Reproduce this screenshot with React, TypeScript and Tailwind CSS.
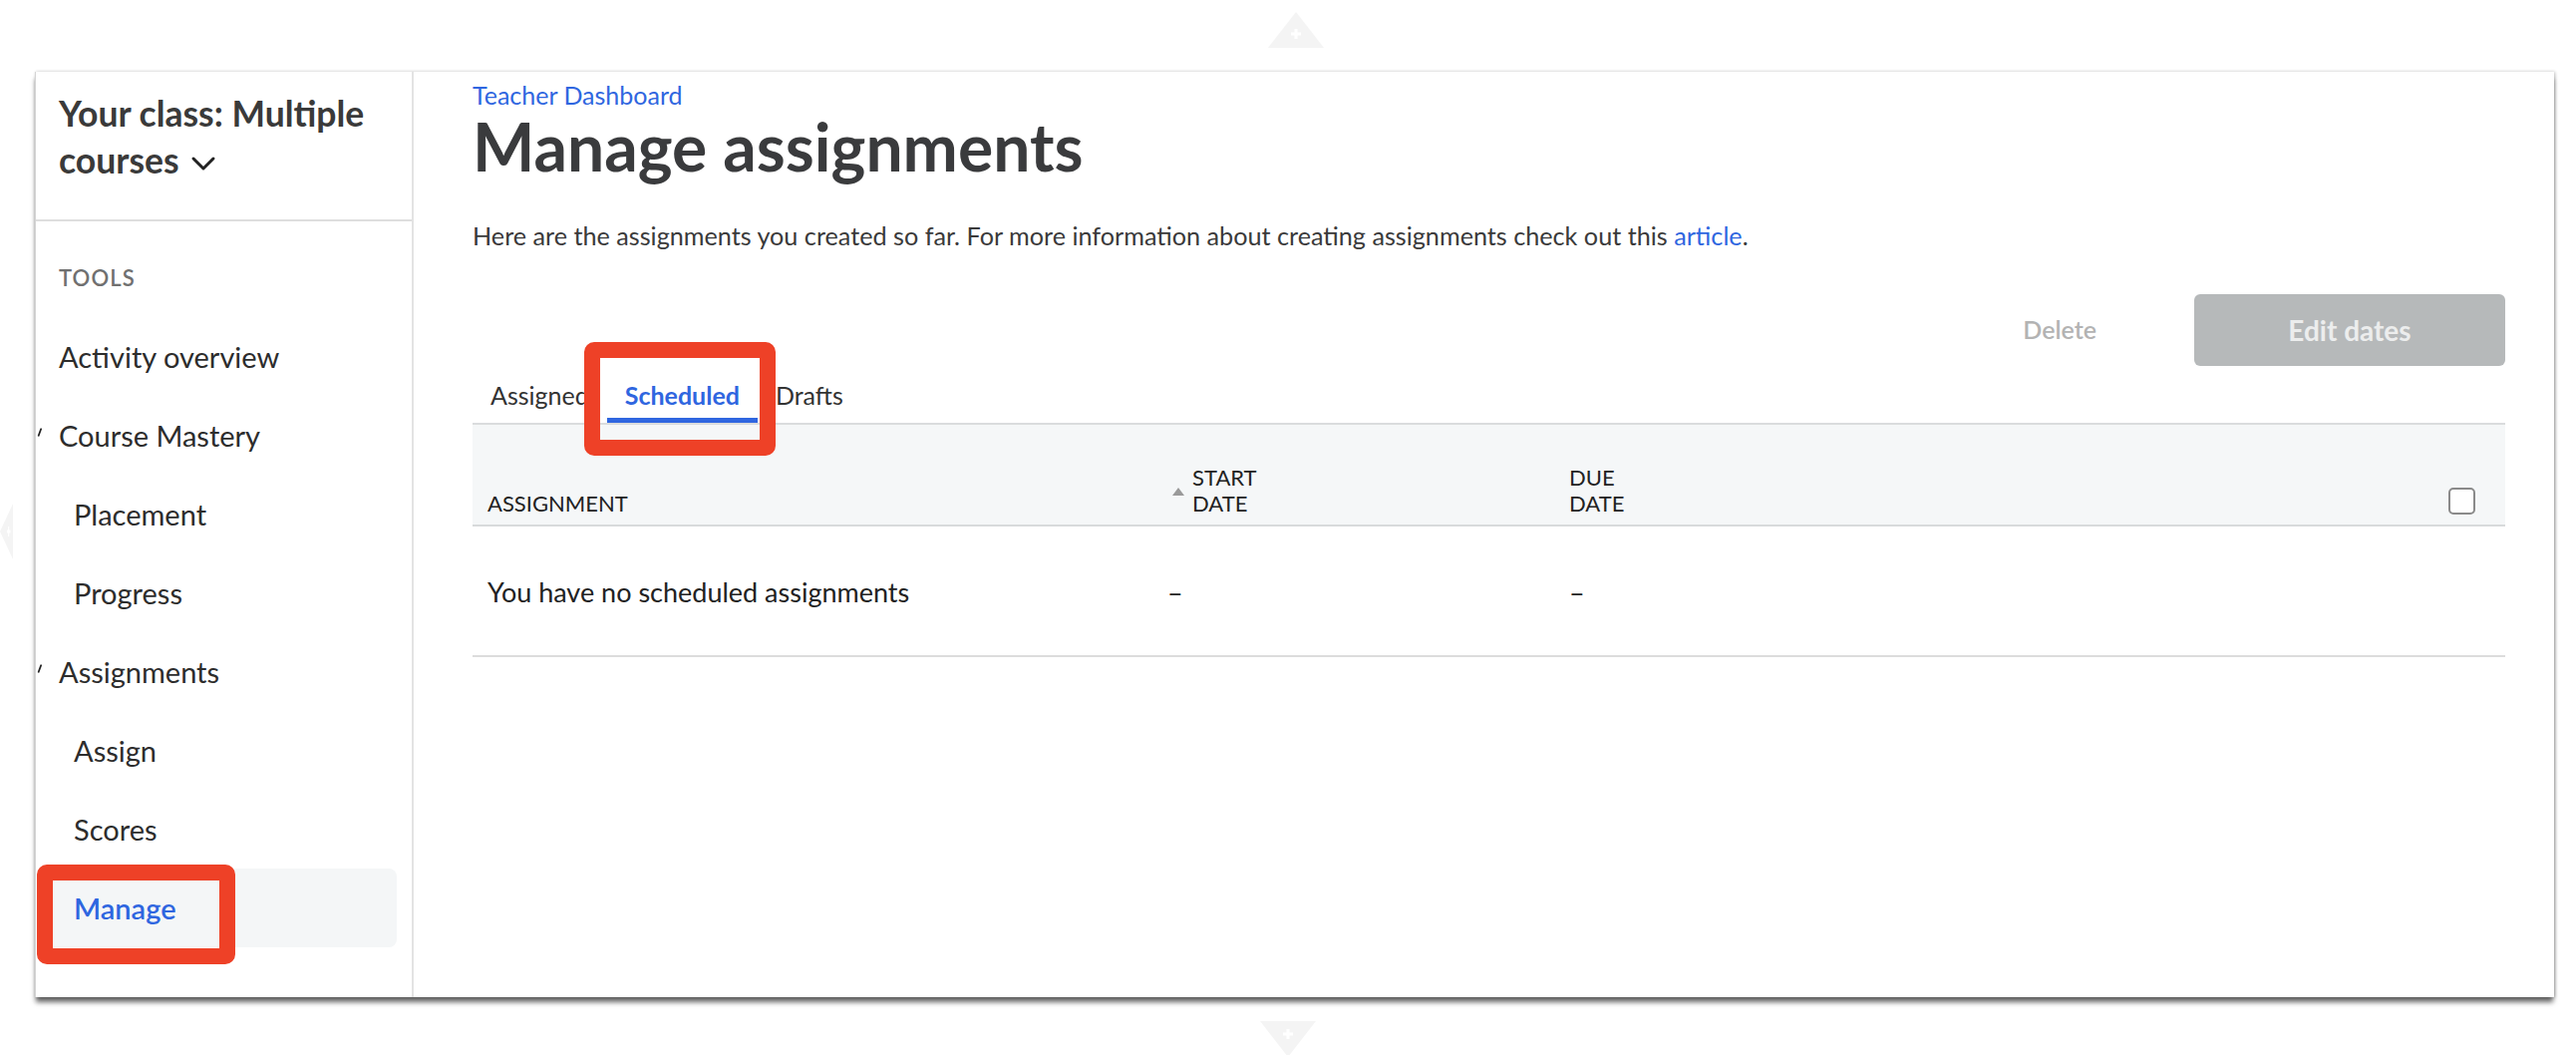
import { ChevronDown } from 'lucide-react'

const tools = [
  { label: 'Activity overview', level: 0 },
  { label: 'Course Mastery', level: 0, caret: true },
  { label: 'Placement', level: 1 },
  { label: 'Progress', level: 1 },
  { label: 'Assignments', level: 0, caret: true },
  { label: 'Assign', level: 1 },
  { label: 'Scores', level: 1 },
  { label: 'Manage', level: 1, active: true },
]

function Marker({ dir }: { dir: 'up' | 'down' | 'left' }) {
  const pts = dir === 'up' ? '28,0 56,36 0,36' : dir === 'down' ? '0,0 56,0 28,36' : '36,0 36,56 0,28'
  const vb = dir === 'left' ? '0 0 36 56' : '0 0 56 36'
  const plus = dir === 'up' ? 'M28 17v10M23 22h10' : dir === 'down' ? 'M28 8v10M23 13h10' : 'M24 23v10M19 28h10'
  return (
    <svg viewBox={vb} className={dir === 'left' ? 'w-[13px] h-[56px]' : 'w-[56px] h-[36px]'} preserveAspectRatio="none">
      <polygon points={pts} fill="#f4f4f4" />
      <path d={plus} stroke="#ffffff" strokeWidth="3" />
    </svg>
  )
}

export default function App() {
  return (
    <div className="relative w-[2584px] h-[1058px] bg-white overflow-hidden font-['Lato','Open_Sans',sans-serif] text-[#333]">
      {/* faint decorations around the frame */}
      <div className="absolute left-[1272px] top-[12px]">
        <Marker dir="up" />
      </div>
      <div className="absolute left-[1264px] top-[1024px]">
        <Marker dir="down" />
      </div>
      <div className="absolute left-0 top-[505px]">
        <Marker dir="left" />
      </div>

      <div className="pt-[72px] pl-[35px]">
        <div className="flex w-[2527px] h-[928px] bg-white border-l border-[#d4d4d4] shadow-[0_6px_5px_-1px_rgba(0,0,0,0.6),1px_0_3px_rgba(0,0,0,0.25)]">
          {/* sidebar */}
          <aside className="w-[379px] shrink-0 border-r-2 border-[#e3e3e3] flex flex-col">
            <div className="h-[150px] border-b-2 border-[#dedede] pl-[23px] pt-[18px]">
              <p className="text-[35.5px] leading-[47px] font-bold text-[#3a3a3a]">
                Your class: Multiple
                <br />
                courses
                <ChevronDown className="inline-block w-[40px] h-[40px] ml-[4px] -mt-[2px] text-[#222]" strokeWidth={1.8} />
              </p>
            </div>
            <p className="mt-[43px] pl-[23px] text-[22px] leading-[28px] font-semibold tracking-[0.05em] text-[#707070]">
              TOOLS
            </p>
            <nav className="mt-[25px] flex flex-col">
              {tools.map((t) => (
                <div
                  key={t.label}
                  className={`relative h-[79px] ml-[8px] mr-[15px] flex items-center rounded-lg text-[29px] ${
                    t.level ? 'pl-[30px]' : 'pl-[15px]'
                  } ${t.active ? 'bg-[#f4f6f7] font-semibold text-[#2f66e0]' : 'text-[#2d2d2d]'}`}
                >
                  {t.caret && (
                    <svg viewBox="0 0 6 10" className="absolute -left-[7px] top-[32px] w-[5px] h-[9px]">
                      <path d="M5 1 L2 9" stroke="#222" strokeWidth="2" strokeLinecap="round" />
                    </svg>
                  )}
                  {t.label}
                </div>
              ))}
            </nav>
          </aside>

          {/* main */}
          <main className="flex-1 pl-[59px] pr-[49px] pt-[7px]">
            <a className="block text-[25px] leading-[32px] text-[#2f66e0]">Teacher Dashboard</a>
            <h1 className="text-[66px] leading-[72px] font-bold text-[#3a3b3d]">Manage assignments</h1>
            <p className="mt-[37px] text-[25.2px] leading-[32px] text-[#3a3a3a]">
              Here are the assignments you created so far. For more information about creating assignments check out
              this <span className="text-[#2f66e0]">article</span>.
            </p>

            <div className="mt-[43px] flex items-center justify-end">
              <button className="mr-[98px] text-[25px] font-semibold text-[#b3b3b3]">Delete</button>
              <button className="w-[312px] h-[72px] rounded-md bg-[#b6b9ba] text-[28px] font-bold text-[#eceded]">
                Edit dates
              </button>
            </div>

            <div className="flex">
              {['Assigned', 'Scheduled', 'Drafts'].map((tab) => (
                <div
                  key={tab}
                  className={`px-[18px] pt-[13px] pb-[7px] text-[25px] leading-[32px] border-b-[5px] ${
                    tab === 'Scheduled' ? 'border-[#2f66e0] text-[#2f66e0] font-bold' : 'border-transparent text-[#333]'
                  }`}
                >
                  {tab}
                </div>
              ))}
            </div>

            <div className="border-t-2 border-[#dadcdd]">
              <div className="grid grid-cols-[697px_403px_1fr_auto] items-end h-[102px] bg-[#f5f7f8] border-b-2 border-[#d8dadb] pb-[8px] text-[22px] leading-[26px] text-[#222]">
                <div className="pl-[15px]">ASSIGNMENT</div>
                <div className="flex items-center">
                  <svg viewBox="0 0 12 8" className="w-[12px] h-[8px] ml-[5px] mr-[8px] mt-[2px] self-center">
                    <polygon points="6,0 12,8 0,8" fill="#9a9a9a" />
                  </svg>
                  <span>
                    START
                    <br />
                    DATE
                  </span>
                </div>
                <div>
                  DUE
                  <br />
                  DATE
                </div>
                <div className="pr-[30px] pb-[2px]">
                  <div className="w-[27px] h-[27px] rounded-[5px] border-2 border-[#8a8a8a] bg-white" />
                </div>
              </div>
              <div className="grid grid-cols-[697px_403px_1fr_auto] items-center h-[131px] pt-[4px] border-b-2 border-[#dcdcdc] text-[27px] text-[#222]">
                <div className="pl-[15px]">You have no scheduled assignments</div>
                <div>–</div>
                <div>–</div>
                <div />
              </div>
            </div>
          </main>
        </div>
      </div>

      {/* annotation boxes */}
      <div className="absolute left-[586px] top-[343px] w-[192px] h-[114px] border-[16px] border-[#ee4127] rounded-[10px]" />
      <div className="absolute left-[37px] top-[867px] w-[199px] h-[100px] border-[16px] border-[#ee4127] rounded-[10px]" />
    </div>
  )
}
